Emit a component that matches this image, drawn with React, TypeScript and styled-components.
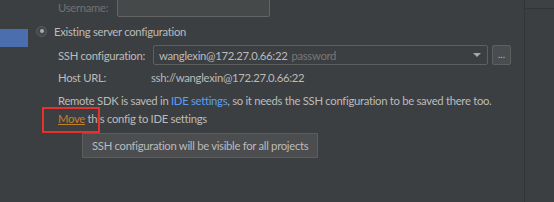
import styled, { createGlobalStyle } from "styled-components";

const Global = createGlobalStyle`
  html, body {
    margin: 0;
    padding: 0;
    background: #3c3f41;
    overflow: hidden;
  }
  * {
    box-sizing: border-box;
  }
`;

export default function App() {
  return (
    <>
      <Global />
      <Screen>
        <Sidebar>
          <SideItem />
        </Sidebar>
        <Main>
          <Row $mt={-3}>
            <Label $dim $w={59}>Username:</Label>
            <Field $w={153} />
          </Row>
          <RadioRow>
            <Radio />
            <span>Existing server configuration</span>
          </RadioRow>
          <Indent>
            <Row $mt={4}>
              <Label $w={95}>SSH configuration:</Label>
              <Combo>
                <span>wanglexin@172.27.0.66:22</span>
                <Hint>password</Hint>
                <Arrow />
              </Combo>
              <DotsButton>...</DotsButton>
            </Row>
            <Row $mt={2}>
              <Label $w={93}>Host URL:</Label>
              <Text>ssh://wanglexin@172.27.0.66:22</Text>
            </Row>
            <Note>
              Remote SDK is saved in <Link>IDE settings</Link>, so it needs the SSH
              configuration to be saved there too.
            </Note>
            <MoveLine>
              <Highlight />
              <MoveLink>Move</MoveLink> this config to IDE settings
              <Tooltip>SSH configuration will be visible for all projects</Tooltip>
            </MoveLine>
          </Indent>
        </Main>
        <RightPane>
          <RightHeader />
        </RightPane>
      </Screen>
    </>
  );
}

const Screen = styled.div`
  display: flex;
  width: 554px;
  height: 202px;
  background: #3c3f41;
  font-family: Lato, "Open Sans", sans-serif;
  font-size: 11.3px;
  letter-spacing: -0.3px;
  color: #bbbbbb;
`;

const Sidebar = styled.div`
  flex: 0 0 28px;
  padding-top: 29px;
`;

const SideItem = styled.div`
  height: 18px;
  background: #4b6eaf;
`;

const Main = styled.div`
  flex: 1;
  min-width: 0;
  padding-left: 8px;
  display: flex;
  flex-direction: column;
`;

const Indent = styled.div`
  padding-left: 22px;
  display: flex;
  flex-direction: column;
`;

const Row = styled.div<{ $mt?: number }>`
  display: flex;
  align-items: center;
  height: 20px;
  flex-shrink: 0;
  margin-top: ${(p) => p.$mt ?? 0}px;
`;

const Label = styled.span<{ $dim?: boolean; $w: number }>`
  flex: 0 0 ${(p) => p.$w}px;
  color: ${(p) => (p.$dim ? "#707274" : "#bbbbbb")};
  white-space: nowrap;
  ${(p) => (p.$dim ? "margin-left: 22px;" : "")}
`;

const Field = styled.div<{ $w: number }>`
  flex: 0 0 ${(p) => p.$w}px;
  height: 20px;
  border: 1px solid #646464;
  border-radius: 2px;
  background: #45494a;
`;

const RadioRow = styled.div`
  display: flex;
  align-items: center;
  gap: 7px;
  height: 20px;
  margin-top: 4px;
  flex-shrink: 0;
`;

const Radio = styled.div`
  width: 11px;
  height: 11px;
  border-radius: 50%;
  border: 1px solid #5a5d5f;
  background: #43494a;
  display: flex;
  align-items: center;
  justify-content: center;
  &::after {
    content: "";
    width: 4px;
    height: 4px;
    border-radius: 50%;
    background: #a9abac;
  }
`;

const Combo = styled.div`
  position: relative;
  flex: 0 0 335px;
  height: 20px;
  border: 1px solid #5e6060;
  border-radius: 2px;
  background: #3c3f41;
  display: flex;
  align-items: center;
  padding-left: 5px;
  gap: 4px;
  white-space: nowrap;
`;

const Hint = styled.span`
  color: #787878;
`;

const Arrow = styled.div`
  position: absolute;
  right: 6px;
  top: 7px;
  width: 0;
  height: 0;
  border-left: 4px solid transparent;
  border-right: 4px solid transparent;
  border-top: 4px solid #a5a7a8;
`;

const DotsButton = styled.div`
  flex: 0 0 19px;
  height: 20px;
  margin-left: 4px;
  border: 1px solid #5e6060;
  border-radius: 2px;
  background: #4a4d4f;
  color: #bbbbbb;
  font-size: 10px;
  letter-spacing: 0;
  display: flex;
  align-items: center;
  justify-content: center;
  line-height: 1;
  padding-bottom: 3px;
`;

const Text = styled.span`
  white-space: nowrap;
`;

const Note = styled.div`
  margin-top: 4px;
  height: 20px;
  line-height: 20px;
  white-space: nowrap;
  flex-shrink: 0;
`;

const Link = styled.span`
  color: #589df6;
`;

const MoveLine = styled.div`
  position: relative;
  margin-top: -1px;
  height: 17px;
  line-height: 17px;
  white-space: nowrap;
  flex-shrink: 0;
`;

const MoveLink = styled.span`
  color: #c47f2c;
  text-decoration: underline;
`;

const Highlight = styled.div`
  position: absolute;
  left: -16px;
  top: -3px;
  width: 58px;
  height: 26px;
  border: 2px solid #e8312d;
  pointer-events: none;
`;

const Tooltip = styled.div`
  position: absolute;
  left: 24px;
  top: 23px;
  height: 25px;
  padding: 0 9px;
  background: #4b4d4f;
  border: 1px solid #5b5d5f;
  line-height: 23px;
  white-space: nowrap;
`;

const RightPane = styled.div`
  flex: 0 0 30px;
  border-left: 1px solid #333537;
  background: #3c3f41;
`;

const RightHeader = styled.div`
  height: 9px;
  border-bottom: 1px solid #333537;
  background: #3e4143;
`;
